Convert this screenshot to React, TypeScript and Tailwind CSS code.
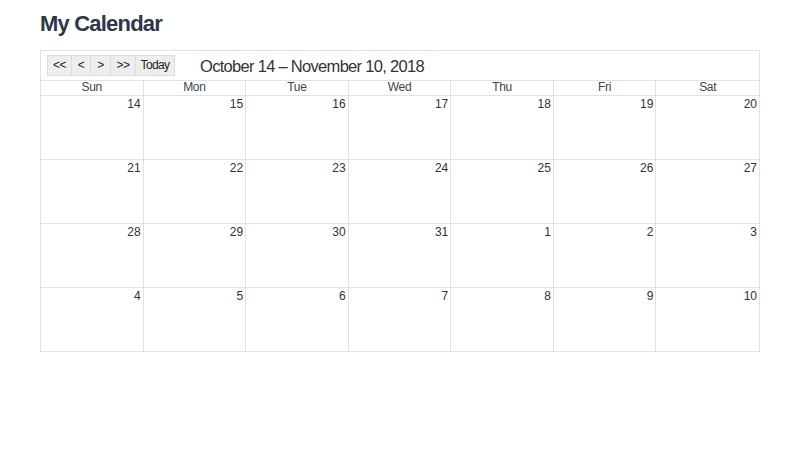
const days = ['Sun', 'Mon', 'Tue', 'Wed', 'Thu', 'Fri', 'Sat']

const weeks = [
  [14, 15, 16, 17, 18, 19, 20],
  [21, 22, 23, 24, 25, 26, 27],
  [28, 29, 30, 31, 1, 2, 3],
  [4, 5, 6, 7, 8, 9, 10],
]

const buttons = [
  { label: '<<', w: 'w-[25px]' },
  { label: '<', w: 'w-[20px]' },
  { label: '>', w: 'w-[21px]' },
  { label: '>>', w: 'w-[26px]' },
  { label: 'Today', w: 'w-[40px]' },
]

export default function App() {
  return (
    <div
      className="min-h-[450px] bg-white px-10 pt-[11px] text-[#333]"
      style={{ fontFamily: '"Liberation Sans", Arial, sans-serif' }}
    >
      {/* Title */}
      <h1 className="text-[22px] font-bold leading-[26px] tracking-[-0.8px] text-[#2d3748]">
        My Calendar
      </h1>

      {/* Calendar */}
      <div className="mt-[13px] w-[720px] border border-[#e2e2e2]">
        <div className="flex h-[29px] items-center px-[6px]">
          <div className="flex">
            {buttons.map((b, i) => (
              <button
                key={i}
                className={`${b.w} h-[21px] border border-[#dcdcdc] bg-[#eeeeee] text-center text-[12px] leading-[19px] tracking-[-0.6px] text-[#222] ${
                  i > 0 ? '-ml-px' : ''
                }`}
              >
                {b.label}
              </button>
            ))}
          </div>
          <div className="ml-[25px] text-[16.5px] leading-[20px] tracking-[-0.7px] text-[#333]">
            October 14 – November 10, 2018
          </div>
        </div>

        <div className="grid grid-cols-7 border-t border-[#e2e2e2]">
          {days.map((d, i) => (
            <div
              key={d}
              className={`h-[14px] text-center text-[12px] leading-[13px] tracking-[-0.3px] text-[#444] ${
                i < 6 ? 'border-r border-[#e2e2e2]' : ''
              }`}
            >
              {d}
            </div>
          ))}
        </div>

        {weeks.map((week, wi) => (
          <div key={wi} className="grid grid-cols-7 border-t border-[#e2e2e2]">
            {week.map((n, i) => (
              <div
                key={i}
                className={`h-[63px] pr-[2px] pt-px text-right text-[12px] leading-[14px] text-[#333] ${
                  i < 6 ? 'border-r border-[#e2e2e2]' : ''
                }`}
              >
                {n}
              </div>
            ))}
          </div>
        ))}
      </div>
    </div>
  )
}
